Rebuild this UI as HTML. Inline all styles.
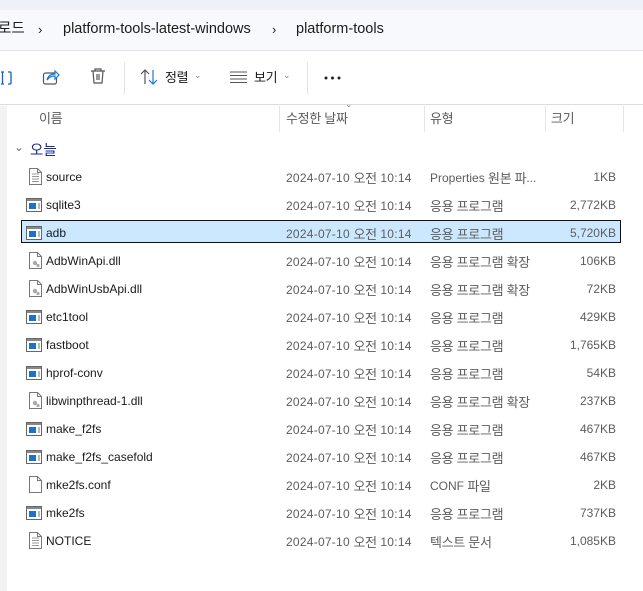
<!DOCTYPE html>
<html><head><meta charset="utf-8"><style>
*{margin:0;padding:0;box-sizing:border-box}
body{width:643px;height:591px;overflow:hidden;background:#fff;font-family:"Liberation Sans","Noto Sans CJK KR",sans-serif;font-size:12px;color:#1a1a1a;position:relative}
.a{position:absolute;white-space:nowrap;line-height:15px}
.k{font-size:13px;letter-spacing:-0.3px}
.ki{font-size:13px;letter-spacing:-0.3px;position:relative;top:1px}
.top{left:0;top:0;width:643px;height:10px;background:#eef1f6}
.bc{left:0;top:10px;width:643px;height:41px;background:#f7f9fc;border-bottom:1px solid #dfe3e8}
.bc span{position:absolute;top:11px;font-size:14.5px;color:#1b1b1b;line-height:17px}
.tb{left:0;top:52px;width:643px;height:53px;background:#fff;border-bottom:1px solid #dcdcdc}
.gut{left:0;top:106px;width:7px;height:485px;background:#f2f2f2}
.hd{top:111px;color:#5a5a5a}
.sep{top:106px;width:1px;height:26px;background:#e5e5e5}
.row{left:21px;width:600px;height:23px}
.n{left:46px}.d{left:286px;color:#5d5d5d;letter-spacing:0.25px}.t{left:430px;color:#5d5d5d}.s{right:27px;color:#5d5d5d;text-align:right}
</style></head><body>
<div class="a top"></div>
<div class="a bc">
<span style="left:-2px">로드</span>
<span style="left:38px;font-size:13px">›</span>
<span style="left:63px">platform-tools-latest-windows</span>
<span style="left:272px;font-size:13px">›</span>
<span style="left:296px">platform-tools</span>
</div>
<div class="a tb">
<svg class="a" style="left:0;top:16px" width="12" height="20"><path d="M1 4h3M1 16h3M2.5 4v12M8 4h2a1 1 0 0 1 1 1v10a1 1 0 0 1-1 1H8" stroke="#0a64c8" stroke-width="1.3" fill="none"/></svg>
<svg class="a" style="left:42px;top:16px" width="18" height="18"><rect x="1.5" y="5" width="13" height="11" rx="2" stroke="#555" stroke-width="1.2" fill="none"/><path d="M5 12c1-4 4-6 8-6V3l4 4-4 4V8c-3 0-6 1-8 4z" fill="#fff" stroke="#1a7ad6" stroke-width="1.2"/></svg>
<svg class="a" style="left:90px;top:15px" width="16" height="18"><path d="M1 4h14M5 4V2h6v2M3 4l1 12h8l1-12M7 7v6M9 7v6" stroke="#555" stroke-width="1.2" fill="none"/></svg>
<div class="a" style="left:124px;top:10px;width:1px;height:32px;background:#e3e3e3"></div>
<svg class="a" style="left:140px;top:17px" width="18" height="16"><path d="M5 15V1M1 5l4-4 4 4" stroke="#555" stroke-width="1.2" fill="none"/><path d="M13 1v14M9 11l4 4 4-4" stroke="#1a7ad6" stroke-width="1.2" fill="none"/></svg>
<span class="a k" style="left:165px;top:18px">정렬</span><span class="a" style="left:194px;top:16px;font-size:9px;color:#888">⌄</span>
<svg class="a" style="left:230px;top:19px" width="17" height="12"><path d="M0 1h17M0 4.5h17M0 8h17M0 11.5h17" stroke="#555" stroke-width="1"/></svg>
<span class="a k" style="left:254px;top:18px">보기</span><span class="a" style="left:283px;top:16px;font-size:9px;color:#888">⌄</span>
<div class="a" style="left:307px;top:10px;width:1px;height:32px;background:#e3e3e3"></div>
<svg class="a" style="left:324px;top:24px" width="18" height="4"><circle cx="2" cy="2" r="1.5" fill="#222"/><circle cx="8.5" cy="2" r="1.5" fill="#222"/><circle cx="15" cy="2" r="1.5" fill="#222"/></svg>
</div>
<div class="a gut"></div>
<span class="a hd k" style="left:39px">이름</span>
<div class="a sep" style="left:279px"></div>
<span class="a hd k" style="left:286px">수정한 날짜</span>
<span class="a" style="left:345px;top:97px;font-size:9px;color:#888">⌄</span>
<div class="a sep" style="left:424px"></div>
<span class="a hd k" style="left:430px">유형</span>
<div class="a sep" style="left:545px"></div>
<span class="a hd k" style="left:551px">크기</span>
<div class="a sep" style="left:623px"></div>
<span class="a" style="left:14px;top:140px;font-size:12px;color:#777">⌄</span>
<span class="a" style="left:30px;top:142px;font-size:14.5px;color:#1a2a8a;line-height:18px">오늘</span>
<div class="a row" style="top:220px;background:#cce8ff;border:1px solid #111"></div>
<div id="rows"></div>
<script>
function K(s){return s.replace(/([\uAC00-\uD7A3][\uAC00-\uD7A3 ]*[\uAC00-\uD7A3]|[\uAC00-\uD7A3])/g,'<span class="ki">$1</span>');}
var R=[["source","Properties 원본 파...","1KB","txt"],["sqlite3","응용 프로그램","2,772KB","exe"],["adb","응용 프로그램","5,720KB","exe"],["AdbWinApi.dll","응용 프로그램 확장","106KB","dll"],["AdbWinUsbApi.dll","응용 프로그램 확장","72KB","dll"],["etc1tool","응용 프로그램","429KB","exe"],["fastboot","응용 프로그램","1,765KB","exe"],["hprof-conv","응용 프로그램","54KB","exe"],["libwinpthread-1.dll","응용 프로그램 확장","237KB","dll"],["make_f2fs","응용 프로그램","467KB","exe"],["make_f2fs_casefold","응용 프로그램","467KB","exe"],["mke2fs.conf","CONF 파일","2KB","blank"],["mke2fs","응용 프로그램","737KB","exe"],["NOTICE","텍스트 문서","1,085KB","txt"]];
var h="";
R.forEach(function(r,i){var y=170+i*28;
var ic;
if(r[3]=="exe")ic='<svg class="a" style="left:26px;top:'+(y)+'px" width="16" height="14"><rect x="0.5" y="0.5" width="15" height="13" fill="#fff" stroke="#666"/><rect x="1" y="1" width="14" height="2" fill="#888"/><rect x="3" y="5" width="7" height="6" fill="#1a73c8"/><rect x="12" y="5" width="2" height="6" fill="#bbb"/></svg>';
else{var inner=r[3]=="txt"?'<path d="M3 6h7M3 8.5h7M3 11h7M3 13.5h7" stroke="#999"/>':(r[3]=="dll"?'<circle cx="6" cy="11" r="2.2" fill="#aaa"/><circle cx="9" cy="13.5" r="1.6" fill="#aaa"/>':'');
ic='<svg class="a" style="left:29px;top:'+(y-2)+'px" width="13" height="17"><path d="M0.5 0.5h8l4 4v12h-12z" fill="#fff" stroke="#777"/><path d="M8.5 0.5v4h4" fill="none" stroke="#777"/>'+inner+'</svg>';}
h+=ic+'<span class="a n" style="top:'+y+'px">'+r[0]+'</span><span class="a d" style="top:'+y+'px">'+K('2024-07-10 오전 10:14')+'</span><span class="a t" style="top:'+y+'px">'+K(r[1])+'</span><span class="a s" style="top:'+y+'px">'+r[2]+'</span>';});
document.getElementById("rows").innerHTML=h;
</script>
</body></html>
